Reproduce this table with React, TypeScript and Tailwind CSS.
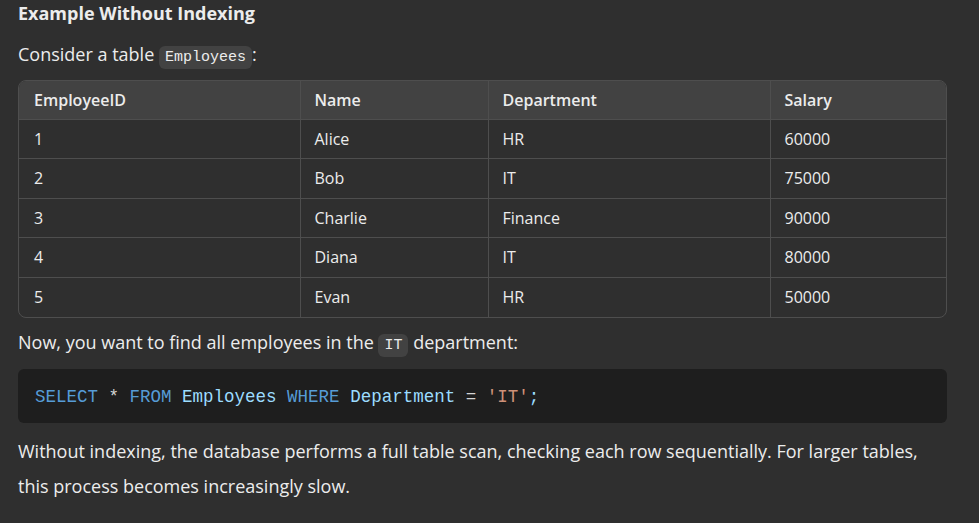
const rows = [
  { id: '1', name: 'Alice', dept: 'HR', salary: '60000' },
  { id: '2', name: 'Bob', dept: 'IT', salary: '75000' },
  { id: '3', name: 'Charlie', dept: 'Finance', salary: '90000' },
  { id: '4', name: 'Diana', dept: 'IT', salary: '80000' },
  { id: '5', name: 'Evan', dept: 'HR', salary: '50000' },
]

const sans = "font-['Open_Sans','Noto_Sans',sans-serif]"
const mono = "font-['Liberation_Mono','DejaVu_Sans_Mono',monospace]"

function Code({ children }: { children: string }) {
  return (
    <code className={`${mono} rounded-md bg-[#424242] px-[6px] py-[3px] text-[15px] text-[#ececec]`}>
      {children}
    </code>
  )
}

export default function App() {
  return (
    <div className={`${sans} h-[523px] w-[979px] overflow-hidden bg-[#2f2f2f] px-[18px] text-[#ececec]`}>
      <h3 className="pt-[1px] text-[18px] font-bold leading-[24px]">Example Without Indexing</h3>

      <p className="mt-[17px] text-[18px] leading-[24px]">
        Consider a table <Code>Employees</Code>:
      </p>

      <div className="mt-[10px] w-[929px] overflow-hidden rounded-lg border border-[#4e4e4e]">
        <table className="w-full border-collapse text-left text-[16px]">
          <thead>
            <tr className="h-[38px] border-b border-[#4e4e4e] bg-[#424242]">
              <th className="w-[281px] px-[15px] font-semibold">EmployeeID</th>
              <th className="w-[188px] border-l border-[#4e4e4e] px-[14px] font-semibold">Name</th>
              <th className="w-[282px] border-l border-[#4e4e4e] px-[14px] font-semibold">Department</th>
              <th className="border-l border-[#4e4e4e] px-[14px] font-semibold">Salary</th>
            </tr>
          </thead>
          <tbody>
            {rows.map((r, i) => (
              <tr key={r.id} className={`h-[39.5px] ${i < rows.length - 1 ? 'border-b border-[#4e4e4e]' : ''}`}>
                <td className="px-[15px]">{r.id}</td>
                <td className="border-l border-[#4e4e4e] px-[14px]">{r.name}</td>
                <td className="border-l border-[#4e4e4e] px-[14px]">{r.dept}</td>
                <td className="border-l border-[#4e4e4e] px-[14px]">{r.salary}</td>
              </tr>
            ))}
          </tbody>
        </table>
      </div>

      <p className="mt-[12px] text-[18px] leading-[24px]">
        Now, you want to find all employees in the <Code>IT</Code> department:
      </p>

      <div className={`${mono} mt-[11px] flex h-[54px] w-[929px] items-center rounded-md bg-[#1e1e1e] px-[17px] pt-[4px] text-[17.5px] text-[#d4d4d4]`}>
        <span className="text-[#569cd6]">SELECT</span>
        <span>&nbsp;*&nbsp;</span>
        <span className="text-[#569cd6]">FROM</span>
        <span>&nbsp;</span>
        <span className="text-[#9cdcfe]">Employees</span>
        <span>&nbsp;</span>
        <span className="text-[#569cd6]">WHERE</span>
        <span>&nbsp;</span>
        <span className="text-[#9cdcfe]">Department</span>
        <span>&nbsp;=&nbsp;</span>
        <span className="text-[#ce9178]">'IT'</span>
        <span className="text-[#9cdcfe]">;</span>
      </div>

      <p className="mt-[11px] max-w-[929px] text-[18px] leading-[35px]">
        Without indexing, the database performs a full table scan, checking each row sequentially. For larger tables,
        this process becomes increasingly slow.
      </p>
    </div>
  )
}
